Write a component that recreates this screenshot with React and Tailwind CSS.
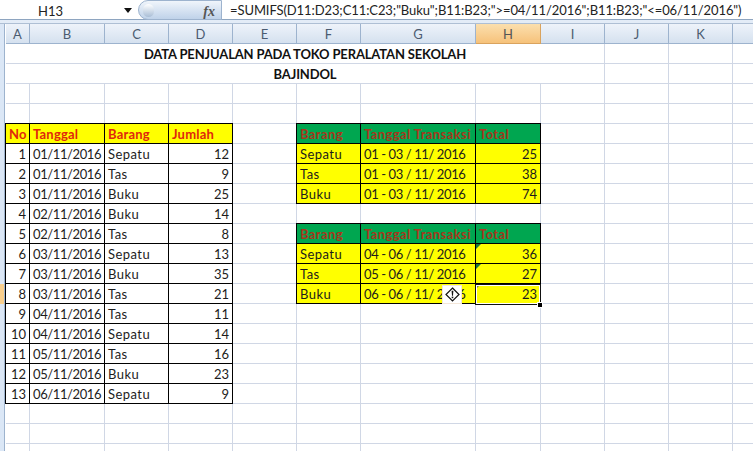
import React from 'react';

const LEFT = [
  ['No', 'Tanggal', 'Barang', 'Jumlah'],
  [1, '01/11/2016', 'Sepatu', 12],
  [2, '01/11/2016', 'Tas', 9],
  [3, '01/11/2016', 'Buku', 25],
  [4, '02/11/2016', 'Buku', 14],
  [5, '02/11/2016', 'Tas', 8],
  [6, '03/11/2016', 'Sepatu', 13],
  [7, '03/11/2016', 'Buku', 35],
  [8, '03/11/2016', 'Tas', 21],
  [9, '04/11/2016', 'Tas', 11],
  [10, '04/11/2016', 'Sepatu', 14],
  [11, '05/11/2016', 'Tas', 16],
  [12, '05/11/2016', 'Buku', 23],
  [13, '06/11/2016', 'Sepatu', 9],
];

const TOP_TABLE = [
  ['Barang', 'Tanggal Transaksi', 'Total'],
  ['Sepatu', '01 - 03 / 11/ 2016', 25],
  ['Tas', '01 - 03 / 11/ 2016', 38],
  ['Buku', '01 - 03 / 11/ 2016', 74],
];

const BOTTOM_TABLE = [
  ['Barang', 'Tanggal Transaksi', 'Total'],
  ['Sepatu', '04 - 06 / 11/ 2016', 36],
  ['Tas', '05 - 06 / 11/ 2016', 27],
  ['Buku', '06 - 06 / 11/ 2016', 23],
];

const COLUMNS = ['A', 'B', 'C', 'D', 'E', 'F', 'G', 'H', 'I', 'J', 'K', ''];
const FORMULA = '=SUMIFS(D11:D23;C11:C23;"Buku";B11:B23;">=04/11/2016";B11:B23;"<=06/11/2016")';
const GRID_COLS = 'grid grid-cols-[24px_75px_64px_64px_64px_64px_115px_65px_64px_64px_64px_21px]';

// letter spacing: Lato's digits run wider than the sheet's, its words narrower
const trackingFor = (text, header, green) => {
  if (header) return green ? 'tracking-[0.4px]' : 'tracking-[0.2px]';
  if (typeof text === 'number') return '';
  return /\d/.test(text) ? 'tracking-[-0.4px]' : 'tracking-[0.45px]';
};

// one spreadsheet cell
const Cell = ({ text = '', black, bg = '', right, header, green, note }) => (
  <div
    className={`relative h-5 flex items-center pt-[3px] px-[3px] overflow-hidden whitespace-nowrap border-r border-b ${
      black ? 'border-black shadow-[-1px_0_0_#000,0_-1px_0_#000,-1px_-1px_0_#000]' : 'border-[#d0d7e5]'
    } ${bg} ${right ? 'justify-end' : ''} ${trackingFor(text, header, green)} ${
      header ? (green ? 'font-bold text-[#a5371c]' : 'font-bold text-[#e0270c]') : 'text-[#1c1c1c]'
    }`}
  >
    {note && <span className={`absolute left-0 top-0 w-0 h-0 border-t-[5px] border-r-[5px] border-r-transparent ${note}`} />}
    {text}
  </div>
);

const TitleCell = ({ text }) => (
  <div className="col-span-9 h-5 flex items-center justify-center pt-[3px] font-bold tracking-[-0.15px] text-[#111] border-r border-b border-[#d0d7e5]">
    {text}
  </div>
);

function buildRows() {
  const rows = [];
  // rows 3 to 21 below the merged title
  for (let r = 0; r < 19; r++) {
    const cells = [];
    for (let c = 0; c < 12; c++) cells.push({});
    rows.push(cells);
  }
  LEFT.forEach((row, i) => {
    row.forEach((v, c) => {
      rows[i + 2][c] = {
        text: v,
        black: true,
        bg: i === 0 ? 'bg-[#ffff00]' : '',
        header: i === 0,
        right: i > 0 && (c === 0 || c === 3),
      };
    });
  });
  const putTable = (table, start) => {
    table.forEach((row, i) => {
      row.forEach((v, c) => {
        rows[start + i][c + 5] = {
          text: v,
          black: true,
          bg: i === 0 ? 'bg-[#00a650]' : 'bg-[#ffff00]',
          header: i === 0,
          green: i === 0,
          right: i > 0 && c === 2,
        };
      });
    });
  };
  putTable(TOP_TABLE, 2);
  putTable(BOTTOM_TABLE, 7);
  rows[8][7].note = 'border-t-[#1e7a3c]';
  rows[9][7].note = 'border-t-[#1e7a3c]';
  rows[10][7].note = 'border-t-[#6b7a5c]';
  return rows;
}

const WarningIcon = () => (
  <div className="absolute left-[442px] top-[285px] z-10 w-[20px] h-[19px] bg-white flex items-center justify-center border border-[#f3e6d8]">
    <svg width="15" height="15" viewBox="0 0 15 15">
      <path d="M7.5 1 14 7.5 7.5 14 1 7.5Z" fill="#fff" stroke="#111" strokeWidth="1.2" />
      <path d="M6.6 3.8h1.8l-.4 5H7Z" fill="#111" />
      <rect x="6.7" y="9.6" width="1.6" height="1.6" fill="#111" />
    </svg>
  </div>
);

export default function App() {
  const rows = buildRows();
  return (
    <div className="relative w-[753px] h-[451px] overflow-hidden bg-white text-[13px] font-['Lato','Carlito',sans-serif] text-[#1c1c1c]">
      {/* Formula bar */}
      <div className="flex items-center h-[20px] border-b border-[#8ea5c0]">
        <div className="w-[124px] shrink-0 pl-[38px] pt-[3px] leading-none text-[#222]">H13</div>
        <svg width="8" height="5" viewBox="0 0 8 5" className="shrink-0 mt-[1px]">
          <path d="M0 0h8L4 5Z" fill="#111" />
        </svg>
        <div className="relative shrink-0 ml-[6px] w-[84px] h-[20px] rounded-l-[12px] border border-[#9db3ce] bg-gradient-to-b from-[#f0f5fb] to-[#bfd2e9]">
          <div className="absolute left-[4px] top-[3px] w-[11px] h-[13px] rounded-full bg-gradient-to-b from-[#ffffff] to-[#a9bed6]" />
          <span className="absolute right-[6px] top-0 font-['Liberation_Serif',serif] italic font-bold text-[14px] text-[#555]">
            fx
          </span>
        </div>
        <div className="min-w-0 flex-1 pl-[8px] pt-[2px] leading-none whitespace-nowrap tracking-[-0.09px] text-[#222]">{FORMULA}</div>
      </div>

      <div className="h-[4px] bg-[#e3ecf7] border-b border-[#aebfd4]" />

      <div className="flex">
        {/* Row header strip */}
        <div className="w-[5px] shrink-0 bg-[#dbe7f6] border-r border-[#9db3ce]">
          <div className="h-[20px]" />
          <div className="h-[240px]" />
          <div className="h-[20px] bg-[#f9cf8d]" />
        </div>

        <div className="flex-1 ml-px">
          {/* Column headers */}
          <div className={GRID_COLS}>
            {COLUMNS.map((c, i) => (
              <div
                key={i}
                className={`h-[20px] flex items-center justify-center pt-[3px] border-r border-b ${
                  c === 'H'
                    ? 'bg-gradient-to-b from-[#fbdfae] to-[#f6c27a] border-[#d9a35e] text-[#555]'
                    : 'bg-gradient-to-b from-[#eef3fa] to-[#d5e1ef] border-[#9db3ce] text-[#4b5b70]'
                }`}
              >
                {c}
              </div>
            ))}
          </div>

          {/* Sheet */}
          <div className={GRID_COLS}>
            <TitleCell text="DATA PENJUALAN PADA TOKO PERALATAN SEKOLAH" />
            <Cell />
            <Cell />
            <Cell />
            <TitleCell text="BAJINDOL" />
            <Cell />
            <Cell />
            <Cell />
            {rows.map((cells, r) =>
              cells.map((cell, c) => <Cell key={`${r}-${c}`} {...cell} />)
            )}
          </div>
        </div>
      </div>

      {/* Active cell selection */}
      <div className="absolute left-[475px] top-[284px] w-[66px] h-[21px] border border-[#111] shadow-[inset_0_0_0_1px_#fff] pointer-events-none" />
      <div className="absolute left-[537px] top-[302px] w-[6px] h-[6px] bg-black border border-white" />
      <WarningIcon />
    </div>
  );
}
